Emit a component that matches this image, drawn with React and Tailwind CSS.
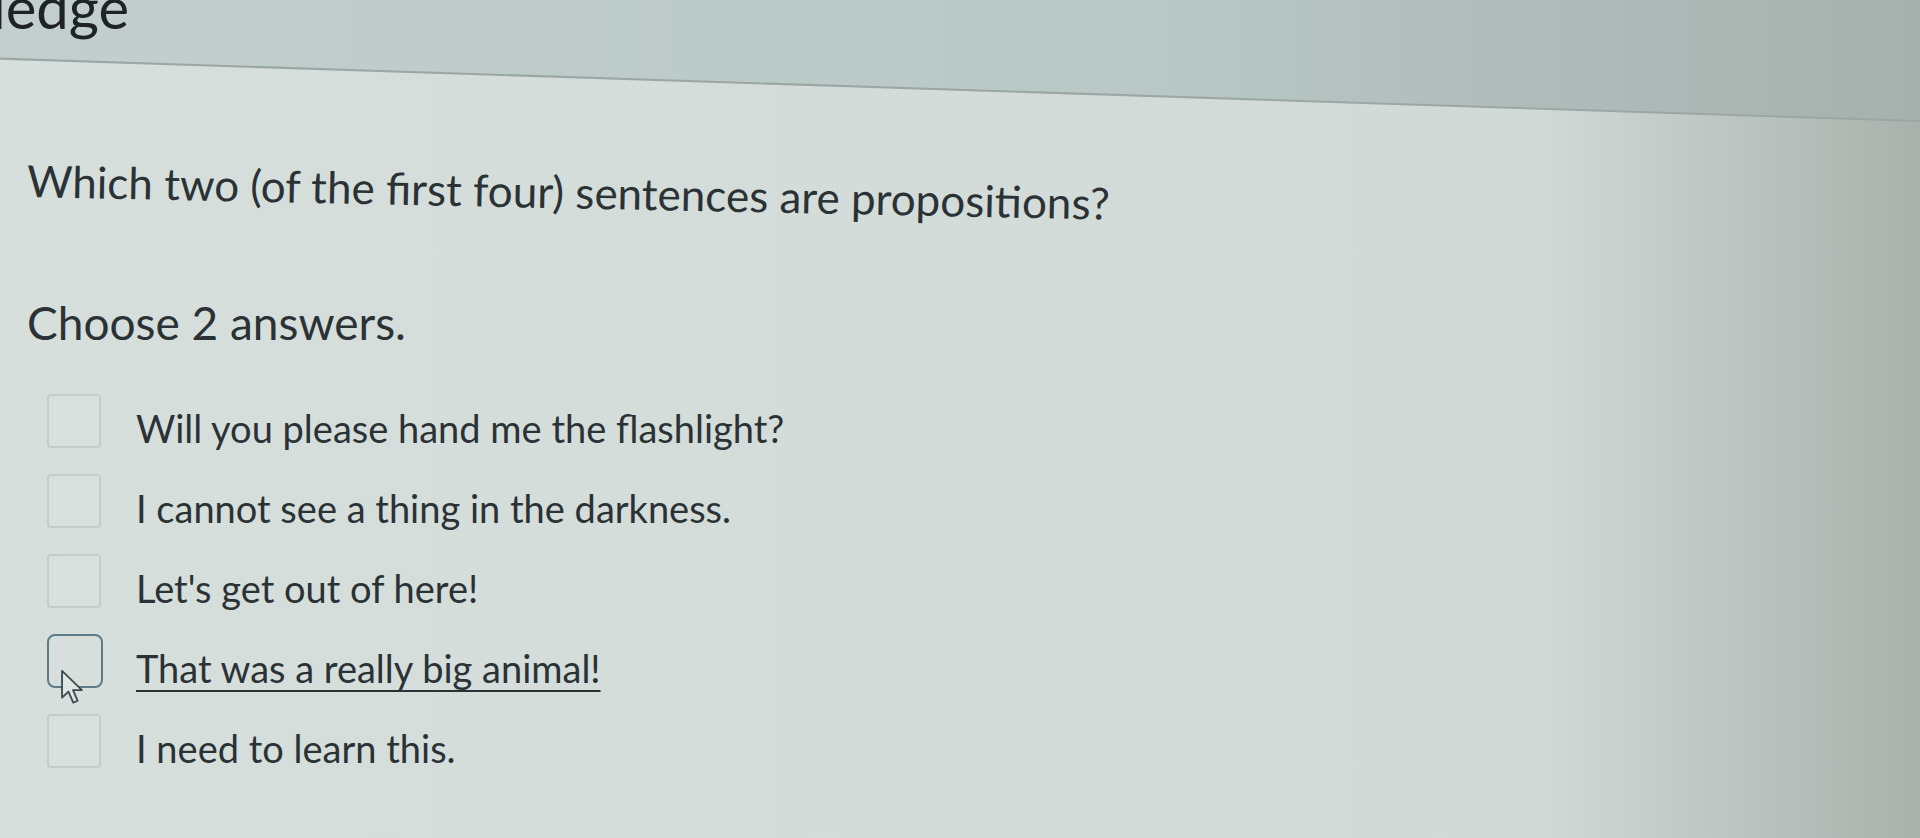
import React from 'react';

const options = [
    { text: 'Will you please hand me the flashlight?' },
    { text: 'I cannot see a thing in the darkness.' },
    { text: "Let's get out of here!" },
    { text: 'That was a really big animal!', hover: true },
    { text: 'I need to learn this.' },
];

const Cursor = () => (
    <svg className="absolute left-[12px] top-[34px] w-[26px] h-[38px]" viewBox="0 0 17 24" fill="none">
        <path d="M2 1.5 L2 19 L6.2 15 L9.3 22.2 L12.2 21 L9.2 14 L15 14 Z" fill="#dfe6e3" stroke="#3d4a50" strokeWidth="1.2" strokeLinejoin="round" />
    </svg>
);

const App = () => {
    return (
        <div className="relative h-[838px] overflow-hidden bg-linear-to-r from-[#d6dfdc] via-[#d1dad7] via-80% to-[#a9b1ad] font-['Lato',sans-serif] text-[#2b3236]">
            {/* Header band */}
            <div className="h-[122px] bg-[#9ba7a5] [clip-path:polygon(0_0,100%_0,100%_100%,0_49%)]">
                <div className="h-[120px] overflow-hidden bg-linear-to-r from-[#c2cfce] via-[#b9c7c5] via-60% to-[#a5b1ad] [clip-path:polygon(0_0,100%_0,100%_100%,0_48%)]">
                    <div className="-ml-[8px] -mt-[22px] text-[58px] leading-none text-[#1d2326]">ledge</div>
                </div>
            </div>

            {/* Question */}
            <div className="pl-[27px]">
                <h1 className="mt-[36px] text-[44px] leading-none origin-left rotate-[1.2deg]">
                    Which two (of the first four) sentences are propositions?
                </h1>
                <p className="mt-[98px] text-[46px] leading-none">Choose 2 answers.</p>

                <ul className="mt-[48px] ml-[20px] flex flex-col gap-[26px]">
                    {options.map((o, i) => (
                        <li key={i} className="relative flex items-start gap-[35px]">
                            <div
                                className={
                                    o.hover
                                        ? 'w-[56px] h-[54px] shrink-0 rounded-[8px] border-2 border-[#5f7b86] bg-[#d7dfdc]'
                                        : 'w-[54px] h-[54px] shrink-0 rounded-[4px] border-2 border-[#c4cdca] bg-[#d9e1de]'
                                }
                            />
                            <span
                                className={
                                    o.hover
                                        ? '-ml-[2px] mt-[15px] text-[38px] leading-none underline decoration-2 underline-offset-[7px]'
                                        : 'mt-[15px] text-[38px] leading-none'
                                }
                            >
                                {o.text}
                            </span>
                            {o.hover && <Cursor />}
                        </li>
                    ))}
                </ul>
            </div>
        </div>
    );
};

export default App;
